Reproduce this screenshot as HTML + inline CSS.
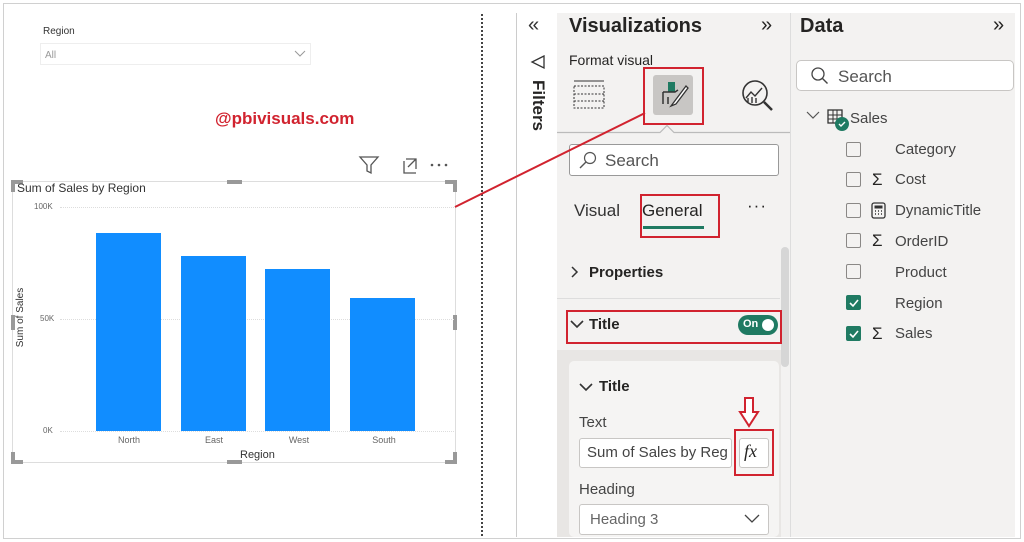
<!DOCTYPE html><html><head><meta charset="utf-8"><style>
*{margin:0;padding:0;box-sizing:border-box}
body{width:1024px;height:542px;background:#fff;position:relative;overflow:hidden;font-family:"Liberation Sans","DejaVu Sans",sans-serif;color:#252423}
.a{position:absolute;white-space:nowrap}
.box{position:absolute;border:1px solid #c8c6c4;background:#fff;border-radius:3px}
.cb{position:absolute;width:15px;height:15px;border:1px solid #8a8886;border-radius:2px;background:#f3f2f1}
.cbk{background:#1f7a62;border-color:#1f7a62}
.red{position:absolute;border:2px solid #d1232f}
.bar{position:absolute;background:#118dff;bottom:111px}
.xl{position:absolute;top:435px;font-size:9px;color:#666;width:60px;text-align:center}
.grid{position:absolute;left:60px;width:394px;border-top:1px dotted #ddd}
.yl{position:absolute;left:34px;font-size:8px;color:#666}
.h{position:absolute;background:#999}
</style></head><body>
<div class="a" style="left:3px;top:3px;width:1018px;height:536px;border:1px solid #d0d0d0"></div>
<!-- slicer -->
<div class="a" style="left:43px;top:26px;font-size:10px;color:#333">Region</div>
<div class="a" style="left:40px;top:43px;width:271px;height:22px;border:1px solid #eee"></div>
<div class="a" style="left:45px;top:50px;font-size:10px;color:#999">All</div>
<svg class="a" style="left:294px;top:50px" width="12" height="8"><path d="M1 1l5 5 5-5" fill="none" stroke="#999"/></svg>
<div class="a" style="left:215px;top:109px;font-size:17px;font-weight:bold;color:#d1232f">@pbivisuals.com</div>
<!-- header icons -->
<svg class="a" style="left:358px;top:155px" width="90" height="20"><path d="M2 2h18l-7 8v8l-4-2v-6z" fill="none" stroke="#555" stroke-width="1.3"/><path d="M46 6v12h12M48 4h10v10M58 4l-8 8" fill="none" stroke="#555" stroke-width="1.3"/><circle cx="74" cy="10" r="1.3" fill="#555"/><circle cx="81" cy="10" r="1.3" fill="#555"/><circle cx="88" cy="10" r="1.3" fill="#555"/></svg>
<!-- chart -->
<div class="a" style="left:12px;top:181px;width:444px;height:282px;border:1px solid #ddd"></div>
<div class="h" style="left:11px;top:180px;width:12px;height:4px"></div><div class="h" style="left:11px;top:180px;width:4px;height:12px"></div>
<div class="h" style="left:445px;top:180px;width:12px;height:4px"></div><div class="h" style="left:453px;top:180px;width:4px;height:12px"></div>
<div class="h" style="left:11px;top:460px;width:12px;height:4px"></div><div class="h" style="left:11px;top:452px;width:4px;height:12px"></div>
<div class="h" style="left:445px;top:460px;width:12px;height:4px"></div><div class="h" style="left:453px;top:452px;width:4px;height:12px"></div>
<div class="h" style="left:227px;top:180px;width:15px;height:4px"></div><div class="h" style="left:227px;top:460px;width:15px;height:4px"></div>
<div class="h" style="left:11px;top:315px;width:4px;height:15px"></div><div class="h" style="left:453px;top:315px;width:4px;height:15px"></div>
<div class="a" style="left:17px;top:181px;font-size:12px;color:#333">Sum of Sales by Region</div>
<div class="grid" style="top:207px"></div><div class="grid" style="top:319px"></div><div class="grid" style="top:431px"></div>
<div class="yl" style="top:202px">100K</div><div class="yl" style="top:314px;left:40px">50K</div><div class="yl" style="top:426px;left:43px">0K</div>
<div class="a" style="left:-9px;top:312px;font-size:10px;color:#333;transform:rotate(-90deg)">Sum of Sales</div>
<div class="bar" style="left:96px;width:65px;top:233px"></div>
<div class="bar" style="left:181px;width:65px;top:256px"></div>
<div class="bar" style="left:265px;width:65px;top:269px"></div>
<div class="bar" style="left:350px;width:65px;top:298px"></div>
<div class="xl" style="left:99px">North</div><div class="xl" style="left:184px">East</div><div class="xl" style="left:269px">West</div><div class="xl" style="left:354px">South</div>
<div class="a" style="left:240px;top:449px;font-size:11px;color:#333">Region</div>
<div class="a" style="left:481px;top:14px;height:522px;border-left:2px dotted #444"></div>
<!-- filters strip -->
<div class="a" style="left:516px;top:13px;width:1px;height:524px;background:#ccc"></div>
<div class="a" style="left:528px;top:14px;font-size:20px;color:#333">«</div>
<svg class="a" style="left:530px;top:54px" width="16" height="16"><path d="M14 2L2 8l12 6z" fill="none" stroke="#333" stroke-width="1.3"/></svg>
<div class="a" style="left:523px;top:108px;font-size:17px;font-weight:bold;transform:rotate(90deg);transform-origin:left top;left:548px;top:80px">Filters</div>
<!-- viz pane -->
<div class="a" style="left:557px;top:13px;width:233px;height:524px;background:#f3f2f1"></div>
<div class="a" style="left:569px;top:15px;font-size:20px;font-weight:bold">Visualizations</div>
<div class="a" style="left:761px;top:14px;font-size:20px">»</div>
<div class="a" style="left:569px;top:52px;font-size:14px">Format visual</div>
<svg class="a" style="left:572px;top:78px" width="34" height="34"><path d="M2 3h30" stroke="#333"/><rect x="2" y="8" width="30" height="22" fill="none" stroke="#333" stroke-dasharray="2 1.5"/><path d="M2 16h30M2 23h30" stroke="#333" stroke-dasharray="2 1.5"/></svg>
<div class="a" style="left:653px;top:75px;width:40px;height:40px;background:#c8c6c4;border-radius:3px"></div>
<svg class="a" style="left:660px;top:80px" width="30" height="30"><rect x="8" y="2" width="7" height="10" fill="#1f7a62"/><path d="M3 12h12l3-2M3 12v12M8 17v7" fill="none" stroke="#333" stroke-width="1.5"/><path d="M26 6L14 22l-3 4 5-2 12-16z" fill="#fff" stroke="#333" stroke-width="1.3"/></svg>
<div class="red" style="left:643px;top:67px;width:61px;height:58px"></div>
<svg class="a" style="left:740px;top:78px" width="36" height="36"><circle cx="15" cy="15" r="12" fill="none" stroke="#333" stroke-width="1.6"/><path d="M6 20l5-6 4 4 7-8M8 24v-4M12 25v-6M16 25v-5" fill="none" stroke="#333" stroke-width="1.4"/><path d="M24 24l8 8" stroke="#333" stroke-width="2.5"/></svg>
<svg class="a" style="left:557px;top:122px" width="233" height="12"><path d="M0 10.5h103l7-7 7 7h116" fill="none" stroke="#bbb" stroke-width="1.2"/></svg>
<div class="box" style="left:569px;top:144px;width:210px;height:32px;border-color:#999"></div>
<svg class="a" style="left:578px;top:151px" width="20" height="20"><circle cx="12" cy="7" r="5.5" fill="none" stroke="#555" stroke-width="1.2"/><path d="M8 11l-6 6" stroke="#555" stroke-width="1.4"/></svg>
<div class="a" style="left:605px;top:151px;font-size:17px;color:#555">Search</div>
<div class="a" style="left:574px;top:201px;font-size:17px;color:#333">Visual</div>
<div class="a" style="left:642px;top:201px;font-size:17px;color:#252423">General</div>
<div class="a" style="left:643px;top:226px;width:61px;height:3px;background:#1f7a62"></div>
<div class="red" style="left:640px;top:194px;width:80px;height:44px"></div>
<div class="a" style="left:747px;top:196px;font-size:17px;letter-spacing:1px">···</div>
<div class="a" style="left:781px;top:247px;width:8px;height:120px;background:#d6d6d6;border-radius:4px"></div>
<svg class="a" style="left:570px;top:265px" width="10" height="14"><path d="M2 2l5 5-5 5" fill="none" stroke="#333" stroke-width="1.5"/></svg>
<div class="a" style="left:589px;top:264px;font-size:15px;font-weight:bold">Properties</div>
<div class="a" style="left:557px;top:298px;width:223px;height:1px;background:#ddd"></div>
<div class="red" style="left:566px;top:310px;width:216px;height:34px"></div>
<svg class="a" style="left:570px;top:318px" width="14" height="12"><path d="M1 3l6 6 6-6" fill="none" stroke="#333" stroke-width="1.6"/></svg>
<div class="a" style="left:589px;top:316px;font-size:15px;font-weight:bold">Title</div>
<div class="a" style="left:738px;top:315px;width:40px;height:20px;border-radius:10px;background:#1f7a62"></div>
<div class="a" style="left:743px;top:318px;font-size:11px;color:#fff;font-weight:bold">On</div>
<div class="a" style="left:762px;top:319px;width:12px;height:12px;border-radius:6px;background:#fff"></div>
<div class="a" style="left:557px;top:350px;width:224px;height:187px;background:#e8e6e4"></div>
<div class="a" style="left:569px;top:361px;width:210px;height:176px;background:#f5f4f3;border-radius:5px"></div>
<svg class="a" style="left:579px;top:381px" width="14" height="12"><path d="M1 3l6 6 6-6" fill="none" stroke="#333" stroke-width="1.6"/></svg>
<div class="a" style="left:599px;top:378px;font-size:15px;font-weight:bold">Title</div>
<div class="a" style="left:579px;top:414px;font-size:15px;color:#444">Text</div>
<div class="box" style="left:579px;top:438px;width:153px;height:30px"></div>
<div class="a" style="left:587px;top:444px;font-size:15px;color:#444">Sum of Sales by Reg</div>
<div class="box" style="left:739px;top:438px;width:30px;height:30px"></div>
<div class="a" style="left:744px;top:441px;font-size:18px;font-style:italic;font-family:'Liberation Serif',serif">fx</div>
<div class="red" style="left:734px;top:429px;width:40px;height:47px"></div>
<svg class="a" style="left:738px;top:396px" width="22" height="32"><path d="M7 2h8v14h5l-9 14-9-14h5z" fill="#fff" stroke="#d1232f" stroke-width="2"/></svg>
<div class="a" style="left:579px;top:481px;font-size:15px;color:#444">Heading</div>
<div class="box" style="left:579px;top:504px;width:190px;height:31px"></div>
<div class="a" style="left:590px;top:511px;font-size:15px;color:#666">Heading 3</div>
<svg class="a" style="left:744px;top:514px" width="16" height="10"><path d="M1 1l7 7 7-7" fill="none" stroke="#444" stroke-width="1.3"/></svg>
<!-- data pane -->
<div class="a" style="left:790px;top:13px;width:1px;height:524px;background:#ddd"></div>
<div class="a" style="left:791px;top:13px;width:224px;height:524px;background:#f3f2f1"></div>
<div class="a" style="left:800px;top:15px;font-size:20px;font-weight:bold">Data</div>
<div class="a" style="left:993px;top:14px;font-size:20px">»</div>
<div class="box" style="left:796px;top:60px;width:218px;height:31px;border-radius:5px"></div>
<svg class="a" style="left:810px;top:66px" width="20" height="20"><circle cx="8" cy="8" r="6" fill="none" stroke="#444" stroke-width="1.3"/><path d="M12.5 12.5l5 5" stroke="#444" stroke-width="1.4"/></svg>
<div class="a" style="left:838px;top:67px;font-size:17px;color:#555">Search</div>
<svg class="a" style="left:806px;top:110px" width="14" height="10"><path d="M1 2l6 6 6-6" fill="none" stroke="#555" stroke-width="1.2"/></svg>
<svg class="a" style="left:827px;top:108px" width="24" height="24"><rect x="1" y="2" width="14" height="13" fill="none" stroke="#333" stroke-width="1.3"/><path d="M1 7h14M1 11h14M6 2v13M10 2v13" stroke="#333"/><circle cx="15" cy="16" r="7" fill="#1f7a62"/><path d="M12 16l2 2 4-4" fill="none" stroke="#fff" stroke-width="1.4"/></svg>
<div class="a" style="left:850px;top:110px;font-size:15px;color:#444">Sales</div>
<div class="cb" style="left:846px;top:142px"></div><div class="a" style="left:895px;top:141px;font-size:15px;color:#444">Category</div>
<div class="cb" style="left:846px;top:172px"></div><div class="a" style="left:872px;top:170px;font-size:17px">Σ</div><div class="a" style="left:895px;top:171px;font-size:15px;color:#444">Cost</div>
<div class="cb" style="left:846px;top:203px"></div>
<svg class="a" style="left:871px;top:202px" width="16" height="17"><rect x="1" y="1" width="13" height="15" rx="2" fill="none" stroke="#333" stroke-width="1.3"/><rect x="3.5" y="3.5" width="8" height="3" fill="#333"/><path d="M4 9h1M7 9h1M10 9h1M4 12h1M7 12h1M10 12h1" stroke="#333" stroke-width="1.5"/></svg>
<div class="a" style="left:895px;top:202px;font-size:15px;color:#444">DynamicTitle</div>
<div class="cb" style="left:846px;top:233px"></div><div class="a" style="left:872px;top:231px;font-size:17px">Σ</div><div class="a" style="left:895px;top:233px;font-size:15px;color:#444">OrderID</div>
<div class="cb" style="left:846px;top:264px"></div><div class="a" style="left:895px;top:264px;font-size:15px;color:#444">Product</div>
<div class="cb cbk" style="left:846px;top:295px"></div><svg class="a" style="left:848px;top:297px" width="12" height="12"><path d="M2 6l3 3 5-6" fill="none" stroke="#fff" stroke-width="1.6"/></svg><div class="a" style="left:895px;top:295px;font-size:15px;color:#444">Region</div>
<div class="cb cbk" style="left:846px;top:326px"></div><svg class="a" style="left:848px;top:328px" width="12" height="12"><path d="M2 6l3 3 5-6" fill="none" stroke="#fff" stroke-width="1.6"/></svg><div class="a" style="left:872px;top:324px;font-size:17px">Σ</div><div class="a" style="left:895px;top:325px;font-size:15px;color:#444">Sales</div>
<!-- red connector line -->
<svg class="a" style="left:0;top:0" width="1024" height="542"><path d="M455 207L645 113" stroke="#d1232f" stroke-width="2"/></svg>
</body></html>
